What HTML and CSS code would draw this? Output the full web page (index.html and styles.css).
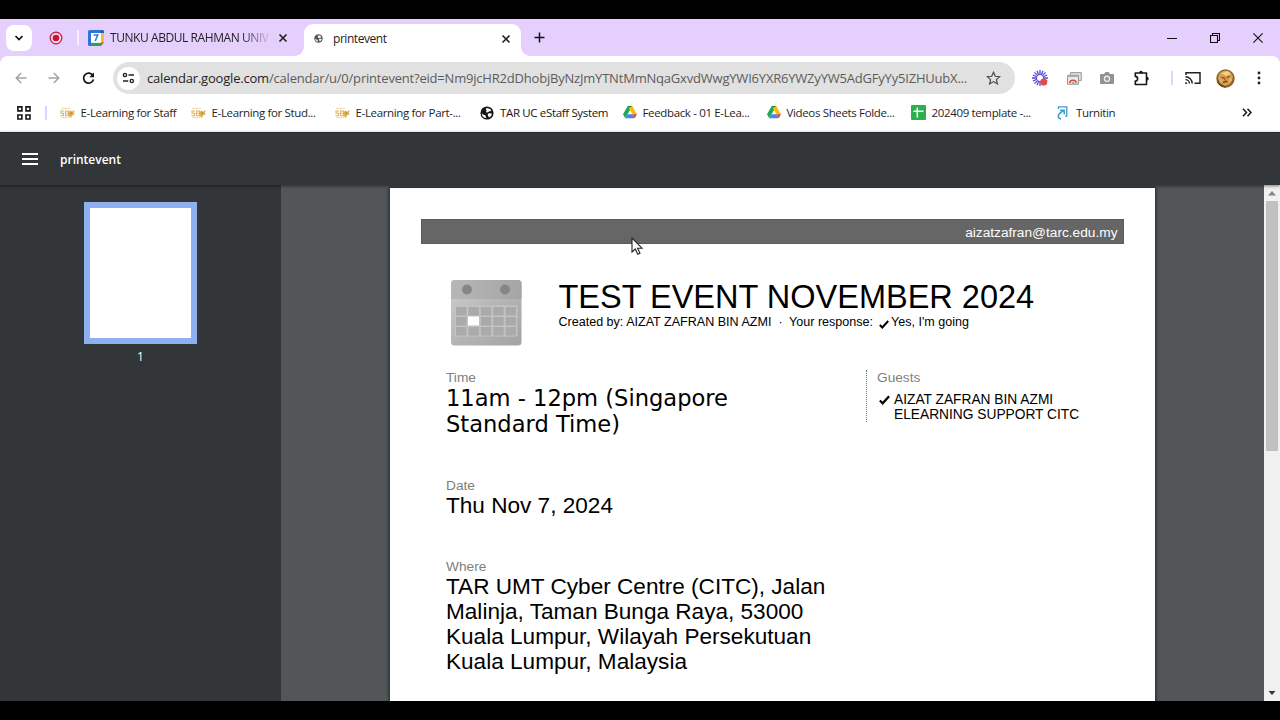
FILE: index.html
```html
<!DOCTYPE html>
<html lang="en">
<head>
<meta charset="utf-8">
<title>printevent</title>
<link rel="stylesheet" href="styles.css">
</head>
<body>
<svg class="defs" width="0" height="0" aria-hidden="true">
  <symbol id="close" viewBox="0 0 10 10"><path d="M1.500 1.500l7 7M8.500 1.500l-7 7" stroke="currentColor" stroke-width="1.600" fill="none"/></symbol>
  <symbol id="globe" viewBox="0 0 16 16"><circle cx="8" cy="8" r="7.500" fill="currentColor"/><path d="M2.200 8.200C3 10.400 5 9.600 6 10.600s.2 2.600 1.400 3.200C4.200 13.800 1.800 11 2.200 8.200zM6.500 3c2-.9 5-.4 6.500 2.200-.8 1.400-2 .4-2.800 1.200-.8.9-1.900 1.200-2.900.6C6.200 6.200 8 5.500 7.500 4.500 7.200 3.900 6.300 3.700 6.500 3zM9 9c1.500-.9 3.600-.7 4.600 0-.5 1.900-1.800 3.500-3.400 4.200C10 11.500 8.300 10.800 9 9z" fill="#fff"/></symbol>
  <symbol id="drive" viewBox="0 0 14 13"><path d="M4.700 0h4.600L7 4z" fill="#188038"/><path d="M4.700 0L0 8.300l2.300 4L7 4z" fill="#21a65a"/><path d="M9.300 0L14 8.300H9.400L5.800 2z" fill="#fbbc04"/><path d="M2.300 12.300L4.600 8.300H9.400l2.300 4z" fill="#4285f4"/><path d="M9.400 8.300H14l-2.300 4z" fill="#ea4335"/></symbol>
  <symbol id="learn" viewBox="0 0 15 12"><path d="M1 1.300h9" stroke="#ecd9a8" stroke-width="1"/><path d="M4 4H1v2.200h2.500v2.500H.5M5.500 4h3v4.700h-3zM5.500 6.200h3" stroke="#dcb469" stroke-width="1.100" fill="none"/><path d="M8.500 4.500l2.500-1 1 1.200 2.500-2-.7 3 .7 1.800-2.500 1-1 2.500-2-1.700z" fill="#e2ae52"/><path d="M1 10.700h8" stroke="#eedcb0"/><path d="M10.500 6.500l1.500-.8" stroke="#9b7638"/></symbol>
  <symbol id="check" viewBox="0 0 10 9"><path d="M0.800 5l2.500 2.500L9.200 1" stroke="#000" stroke-width="2" fill="none"/></symbol>
</svg>

<div class="browser">
  <header class="tabstrip">
    <button class="tab-search"><svg width="10" height="6" viewBox="0 0 10 6"><path d="M1.500 1L5 4.500 8.500 1" stroke="#111" stroke-width="1.700" fill="none"/></svg></button>
    <svg class="record" width="14" height="14" viewBox="0 0 14 14"><circle cx="7" cy="7" r="5.800" fill="#f2dcea" stroke="#c4183c" stroke-width="1.200"/><circle cx="7" cy="7" r="3.300" fill="#c9143a"/></svg>
    <span class="tab-divider"></span>
    <div class="tab tab-idle">
      <svg width="16" height="16" viewBox="0 0 16 16"><path d="M0 1.500Q0 0 1.500 0H13v4H4v12H1.500Q0 16 0 14.500z" fill="#2f73d9"/><path d="M13 0h1.500Q16 0 16 1.500V4h-3z" fill="#1d5bbb"/><path d="M13 3h3v10h-3z" fill="#f6bf26"/><path d="M3 12.500h10V16H3z" fill="#27a557"/><path d="M13 12.500h3L13 16z" fill="#ea4335"/><path d="M3 3h10v9.800H3z" fill="#fff"/><path d="M5.500 5h4.300L7.200 11" stroke="#3277d6" stroke-width="1.500" fill="none"/></svg>
      <span class="tab-title faded">TUNKU ABDUL RAHMAN UNIV</span>
      <svg class="x" width="10" height="10"><use href="#close"/></svg>
    </div>
    <div class="tab tab-active">
      <svg class="favicon" width="9" height="9"><use href="#globe"/></svg>
      <span class="tab-title">printevent</span>
      <svg class="x" width="10" height="10"><use href="#close"/></svg>
    </div>
    <svg class="new-tab" width="11" height="11" viewBox="0 0 11 11"><path d="M5.500 0.500v10M.5 5.500h10" stroke="#111" stroke-width="1.500"/></svg>
    <div class="window-controls">
      <svg width="10" height="10" viewBox="0 0 10 10"><path d="M0 5.500h10" stroke="#111"/></svg>
      <svg width="10" height="10" viewBox="0 0 10 10"><path d="M.5 2.500h7v7h-7zM2.500 2.500V.5h7v7h-2" stroke="#111" stroke-width="1.100" fill="none"/></svg>
      <svg width="10" height="10" viewBox="0 0 10 10"><path d="M.4.4l9.200 9.200M9.600.4L.4 9.600" stroke="#111" stroke-width="1.100"/></svg>
    </div>
  </header>

  <div class="toolbar">
    <svg class="back" width="12" height="12" viewBox="0 0 12 12"><path d="M11.500 6H1.200M6.200 1L1.200 6l5 5" stroke="#a2a2a2" stroke-width="1.400" fill="none"/></svg>
    <svg class="forward" width="12" height="12" viewBox="0 0 12 12"><path d="M.5 6h10.300M5.800 1l5 5-5 5" stroke="#a2a2a2" stroke-width="1.400" fill="none"/></svg>
    <svg class="reload" width="13" height="13" viewBox="0 0 13 13"><path d="M11 3.600A5 5 0 1 0 11.500 7.500" stroke="#161616" stroke-width="1.700" fill="none"/><path d="M12 .5v4.700H7.300z" fill="#161616"/></svg>
    <div class="address">
      <span class="site-info"><svg width="13" height="12" viewBox="0 0 13 12"><g stroke="#222" stroke-width="1.400" fill="none"><circle cx="3" cy="3" r="1.600"/><path d="M6.500 3H12M1 9h5.200"/><circle cx="9.800" cy="9" r="1.600"/></g></svg></span>
      <span class="url"><b>calendar.google.com</b>/calendar/u/0/printevent?eid=Nm9jcHR2dDhobjByNzJmYTNtMmNqaGxvdWwgYWI6YXR6YWZyYW5AdGFyYy5IZHUubX...</span>
      <svg class="star" width="15" height="14" viewBox="0 0 15 14"><path d="M7.500 1.300l1.800 4 4.400.4-3.300 2.900 1 4.300-3.900-2.300-3.900 2.300 1-4.300L1.300 5.700l4.400-.4z" stroke="#4a4a4a" stroke-width="1.200" fill="none"/></svg>
    </div>
    <svg class="ext-loom" width="17" height="17" viewBox="0 0 17 17"><g stroke="#5548d8" stroke-width="1.300"><path d="M8 0v16M0 8h16M2.400 2.400l11.200 11.200M13.600 2.400L2.400 13.600M5 .8l6 14.400M11 .8L5 15.200M.8 5l14.400 6M15.200 5L.8 11"/></g><circle cx="8" cy="8" r="3" fill="#fff"/><circle cx="11.800" cy="12" r="3.500" fill="#e9484f"/></svg>
    <svg class="ext-cards" width="15" height="13" viewBox="0 0 15 13"><path d="M3.500 3V.6h10.800v8H11.500" fill="#ddd" stroke="#9a9a9a"/><path d="M.5 3.300h11v9H.5z" fill="#e9e9e9" stroke="#999"/><path d="M.5 3.500h11v1.500H.5z" fill="#aaa"/><path d="M2.500 11a3.600 3.600 0 0 1 7 0" stroke="#dc4b40" stroke-width="1.700" fill="none"/><path d="M4.500 11.500a1.700 1.700 0 0 1 3.200 0z" fill="#4c86de"/><path d="M8 11.500l1.700-1.700.8 1.700z" fill="#e9b83a"/></svg>
    <svg class="ext-camera" width="14" height="12" viewBox="0 0 14 12"><path d="M1 2h3l1.500-2h3L10 2h3q1 0 1 1v8q0 1-1 1H1q-1 0-1-1V3q0-1 1-1z" fill="#929292"/><circle cx="7" cy="6.800" r="3.200" fill="#eee"/><circle cx="7" cy="6.800" r="1.900" fill="#929292"/></svg>
    <svg class="ext-puzzle" width="16" height="16" viewBox="0 0 16 16"><path d="M1.300 3h11.200v11.500H1.300V11a2.300 2.300 0 0 0 0-4.600z" fill="none" stroke="#161616" stroke-width="1.600" stroke-linejoin="round"/><path d="M5.600 2.700a1.400 1.400 0 0 1 2.800 0zM12.800 7.200a1.500 1.500 0 0 1 0 3z" fill="#161616" stroke="#161616"/></svg>
    <span class="tool-divider"></span>
    <svg class="cast" width="16" height="12" viewBox="0 0 16 12"><path d="M1 3V.8h14v10.400H9.500" stroke="#222" stroke-width="1.500" fill="none"/><path d="M.5 4.800a6.700 6.700 0 0 1 6.700 6.700M.5 7.600a3.900 3.900 0 0 1 3.900 3.900" stroke="#222" stroke-width="1.400" fill="none"/><path d="M.3 10a2 2 0 0 1 2 2h-2z" fill="#222"/></svg>
    <svg class="avatar" width="19" height="19" viewBox="0 0 19 19"><circle cx="9.500" cy="9.500" r="9.200" fill="#8f5f28"/><path d="M3 5Q8-1 14 3l3 4q0 4-3 8l-5 2-5-3-2-5z" fill="#d79f50"/><path d="M5 4l7-2 3 3-5 2z" fill="#f0cf82"/><path d="M3 9l3 3-1 2M14 8l2 3-3 3" fill="#edbd69"/><path d="M5.500 8.500l2.500.5M11 8.500l2.500-1M7 13.500q3-1.500 4.500-.5" stroke="#603a18" stroke-width="1.200" fill="none"/><path d="M9 8l-.5 3 2 .3" stroke="#a85520" fill="none"/><path d="M1.500 13q3 4.500 8 5" stroke="#5b3b1a" stroke-width="1.300" fill="none"/></svg>
    <svg class="kebab" width="4" height="14" viewBox="0 0 4 14"><g fill="#222"><circle cx="2" cy="2" r="1.400"/><circle cx="2" cy="7" r="1.400"/><circle cx="2" cy="12" r="1.400"/></g></svg>
  </div>

  <nav class="bookmarks">
    <svg class="apps" width="14" height="14" viewBox="0 0 14 14"><path d="M.9.9h4v4h-4zM9 .9h4v4H9zM.9 9h4v4h-4zM9 9h4v4H9z" stroke="#161616" stroke-width="1.600" fill="none"/></svg>
    <span class="tool-divider"></span>
    <div class="bookmark-list">
      <a class="bm"><svg width="15" height="12"><use href="#learn"/></svg><span>E-Learning for Staff</span></a>
      <a class="bm"><svg width="15" height="12"><use href="#learn"/></svg><span>E-Learning for Stud...</span></a>
      <a class="bm"><svg width="15" height="12"><use href="#learn"/></svg><span>E-Learning for Part-...</span></a>
      <a class="bm dark"><svg width="14" height="14"><use href="#globe"/></svg><span>TAR UC eStaff System</span></a>
      <a class="bm"><svg width="14" height="13"><use href="#drive"/></svg><span>Feedback - 01 E-Lea...</span></a>
      <a class="bm"><svg width="14" height="13"><use href="#drive"/></svg><span>Videos Sheets Folde...</span></a>
      <a class="bm"><svg width="15" height="15" viewBox="0 0 15 15"><rect width="15" height="15" rx="1" fill="#2bb14c"/><path d="M2.500 6.200h10M6.300 2.500v10" stroke="#fff" stroke-width="1.500"/></svg><span>202409 template -...</span></a>
      <a class="bm turnitin"><svg width="11" height="14" viewBox="0 0 11 14"><path d="M1.500 3V.8H9.800v9.400H8" stroke="#3c9fcc" stroke-width="1.300" fill="none"/><path d="M7.200 8.500V4.300H3M7 4.500Q1.500 7.500 1.300 10q0 2.500 2.700 3" stroke="#3c9fcc" stroke-width="1.500" fill="none"/></svg><span>Turnitin</span></a>
    </div>
    <svg class="more" width="10" height="9" viewBox="0 0 10 9"><path d="M1 .8l3.500 3.700L1 8.200M5.500.8L9 4.500 5.500 8.200" stroke="#161616" stroke-width="1.500" fill="none"/></svg>
  </nav>

  <div class="viewer-bar">
    <svg width="16" height="12" viewBox="0 0 16 12"><path d="M0 1h16M0 6h16M0 11h16" stroke="#fff" stroke-width="1.800"/></svg>
    <span class="doc-name">printevent</span>
  </div>

  <main class="viewer">
    <aside class="thumbs">
      <div class="thumb"></div>
      <span class="thumb-no">1</span>
    </aside>
    <section class="stage">
      <article class="page">
        <div class="owner">aizatzafran@tarc.edu.my</div>
        <div class="event-head">
          <svg width="71" height="66" viewBox="0 0 71 66">
            <defs>
              <linearGradient id="cal" x1="0" y1="0" x2="1" y2="1"><stop offset="0" stop-color="#d0d0d0"/><stop offset=".5" stop-color="#b5b5b5"/><stop offset="1" stop-color="#a3a3a3"/></linearGradient>
              <linearGradient id="calTop" x1="0" x2="1" y1="0" y2="0"><stop offset="0" stop-color="#b7b7b7"/><stop offset="1" stop-color="#a5a5a5"/></linearGradient>
              <pattern id="cells" x="4" y="26" width="12.400" height="10" patternUnits="userSpaceOnUse"><rect x="1" y="1" width="10.600" height="8.600" fill="#aaa"/></pattern>
            </defs>
            <rect width="70.500" height="65.500" rx="3.500" fill="url(#cal)"/>
            <path d="M0 19V3.500Q0 0 3.500 0H67Q70.500 0 70.500 3.500V19z" fill="url(#calTop)"/>
            <circle cx="16" cy="9.500" r="5" fill="#868686"/><circle cx="54" cy="9.500" r="5" fill="#868686"/>
            <rect x="4" y="25.500" width="62.500" height="31" fill="#c4c4c4"/>
            <rect x="4" y="26" width="62" height="30" fill="url(#cells)"/>
            <rect x="17" y="36.500" width="11" height="9" fill="#fff"/>
          </svg>
          <div>
            <h1>TEST EVENT NOVEMBER 2024</h1>
            <p class="byline"><span>Created by: AIZAT ZAFRAN BIN AZMI</span><span class="dot">·</span><span class="resp">Your response:</span><svg width="10" height="9"><use href="#check"/></svg><span>Yes, I'm going</span></p>
          </div>
        </div>
        <div class="details">
          <div class="facts">
            <div class="fact time"><h2>Time</h2><p>11am - 12pm (Singapore<br>Standard Time)</p></div>
            <div class="fact date"><h2>Date</h2><p>Thu Nov 7, 2024</p></div>
            <div class="fact where"><h2>Where</h2><p>TAR UMT Cyber Centre (CITC), Jalan<br>Malinja, Taman Bunga Raya, 53000<br>Kuala Lumpur, Wilayah Persekutuan<br>Kuala Lumpur, Malaysia</p></div>
          </div>
          <div class="guests">
            <h2>Guests</h2>
            <div class="guest"><svg width="11" height="10"><use href="#check"/></svg><span>AIZAT ZAFRAN BIN AZMI</span></div>
            <div class="guest"><i></i><span>ELEARNING SUPPORT CITC</span></div>
          </div>
        </div>
      </article>
    </section>
    <div class="scrollbar">
      <svg width="8" height="5" viewBox="0 0 8 5"><path d="M0 4.500L4 0l4 4.500z" fill="#858585"/></svg>
      <div class="grip"></div>
      <svg class="down" width="8" height="5" viewBox="0 0 8 5"><path d="M.5 0h7L4 4z" fill="#333"/></svg>
    </div>
  </main>
</div>
<svg class="cursor" width="13" height="19" viewBox="0 0 13 19"><path d="M1 1v14l3.300-3 2.400 5.200 2.300-1-2.400-5H11z" fill="#fff" stroke="#222" stroke-width="1.100"/></svg>
</body>
</html>
```
FILE: styles.css
```css
* { box-sizing: border-box; }
body {
  margin: 0;
  width: 1280px;
  height: 720px;
  overflow: hidden;
  background: #000;
  font-family: "Open Sans", "Noto Sans", sans-serif;
  font-size: 12px;
  color: #1f1f1f;
}
svg { display: block; flex: none; }
.defs { position: absolute; }
h1, h2, p { margin: 0; font-weight: 400; }
.browser { display: flex; flex-direction: column; height: 701px; padding-top: 19px; }

/* tab strip */
.tabstrip { position: relative; z-index: 1; display: flex; align-items: center; height: 37px; background: #e5cffc; padding-left: 6px; }
.tab-search {
  display: flex; align-items: center; justify-content: center;
  width: 26px; height: 26px; padding: 0; border: 0; border-radius: 8px; background: #fff;
}
.record { margin-left: 17px; }
.tab-divider { width: 2px; height: 15px; margin-left: 14px; background: #f7effe; }
.tab { display: flex; align-items: center; white-space: nowrap; }
.tab-idle { margin-left: 9px; width: 216px; }
.tab-title { flex: none; letter-spacing: -0.4px; }
.faded {
  width: 160px; margin-left: 6px; letter-spacing: -0.43px;
  mask-image: linear-gradient(90deg, #000 132px, transparent 162px);
}
.tab-idle .x { margin-left: 8px; }
.tab-active {
  position: relative; align-self: flex-end; width: 217px; height: 32px; padding-left: 10px;
  padding-bottom: 3px; border-radius: 9px 9px 0 0; background: #fff; color: #222;
}
.tab-active::before, .tab-active::after {
  content: ""; position: absolute; bottom: 0; width: 9px; height: 9px;
}
.tab-active::before { left: -9px; background: radial-gradient(circle at 0 0, transparent 8.5px, #fff 9px); }
.tab-active::after { right: -9px; background: radial-gradient(circle at 100% 0, transparent 8.5px, #fff 9px); }
.favicon { color: #555; }
.tab-active .tab-title { width: 168px; margin-left: 10px; letter-spacing: -0.55px; letter-spacing: -0.55px; }
.tab-active .tab-title { letter-spacing: -0.45px; }
.window-controls { display: flex; gap: 33px; margin-left: auto; margin-right: 17px; }
.new-tab { margin-left: 13px; }

/* address row */
.toolbar {
  position: relative; display: flex; align-items: center; height: 44px; padding-left: 15px;
  background: #fff; border-radius: 8px 8px 0 0; box-shadow: 0 -8px 0 #e5cffc;
}
.forward { margin-left: 21px; }
.reload { margin-left: 22px; }
.address {
  display: flex; align-items: center; width: 902px; height: 32px; margin-left: 18px;
  padding-left: 4px; border-radius: 16px; background: #e1e1e1;
}
.site-info { display: flex; align-items: center; justify-content: center; width: 23px; height: 23px; border-radius: 50%; background: #fff; }
.url { width: 831px; margin-left: 7px; font-size: 13px; white-space: nowrap; color: #5c5c5c; letter-spacing: -0.2px; }
.url b { font-weight: 400; color: #1f1f1f; }
.star { margin-left: 8px; }
.ext-loom { margin-left: 17px; }
.ext-cards { margin-left: 18px; }
.ext-camera { margin-left: 18px; }
.ext-puzzle { margin-left: 20px; }
.tool-divider { width: 2px; height: 14px; background: #e5cffc; }
.toolbar .tool-divider { margin-left: 21px; }
.cast { margin-left: 12px; }
.avatar { margin-left: 15px; }
.kebab { margin-left: 22px; }

/* bookmarks */
.bookmarks { display: flex; align-items: center; height: 32px; padding: 0 0 7px 17px; background: #fff; }
.bookmarks .tool-divider { margin-left: 14px; }
.bookmark-list { display: grid; grid-template-columns: 131px 144px 145px 143px 144px 144px 146px 80px; margin-left: 13px; }
.bm { display: flex; align-items: center; white-space: nowrap; font-size: 11.5px; }
.bm span { margin-left: 5.500px; letter-spacing: -0.35px; }
.dark span { margin-left: 6px; }
.turnitin span { margin-left: 8px; }
.dark { color: #161616; }
.more { margin-left: 105px; }

/* PDF viewer */
.viewer-bar {
  display: flex; align-items: center; gap: 22px; height: 53px; padding-left: 22px; position: relative; z-index: 1;
  background: #323639; border-top: 1px solid #27292b; box-shadow: 0 1px 3px rgba(0,0,0,.5); color: #fff;
}
.doc-name { font-weight: 600; letter-spacing: 0; }
.viewer { display: flex; height: 516px; }
.thumbs { display: flex; flex-direction: column; align-items: center; width: 281px; padding-top: 17px; background: #323639; color: #fff; }
.thumb { width: 113px; height: 142px; border: 6px solid #8fb0ee; background: #fff; }
.thumb-no { margin-top: 5px; line-height: 16px; font-size: 12px; }
.stage { width: 983px; padding: 3px 0 0 109px; background: #525659; overflow: hidden; }
.page {
  width: 764.5px; height: 520px; padding: 31px 0 0 31px; background: #fff; box-shadow: 0 0 3px 1px rgba(20,28,28,.8);
  font-family: "Liberation Sans", Arial, sans-serif; color: #000;
}
.owner { width: 702.5px; height: 25px; padding-right: 5px; border: 1px solid #5c5c5c; background: #666; color: #fff; text-align: right; font-size: 13.700px; line-height: 26px; }
.event-head { display: flex; gap: 37px; padding: 36px 0 0 29.500px; height: 126px; }
h1 { margin-top: -1px; font-size: 32.500px; line-height: 36px; white-space: nowrap; }
.byline { display: flex; align-items: center; font-size: 12.550px; line-height: 15px; white-space: nowrap; }
.dot { margin: 0 6.500px 0 7px; }
.resp { margin-right: 6px; }
.byline svg { margin: 3px 2px 0 0; }
.details { display: flex; padding-left: 25px; white-space: nowrap; }
.facts { width: 420px; }
h2 { font-size: 13.700px; line-height: 16px; color: #808080; }
.fact p { margin-top: -1px; font-size: 22.580px; line-height: 25px; }
.time { height: 108px; }
.time p { font-family: "DejaVu Sans", sans-serif; line-height: 26px; }
.date { height: 81px; }
.guests { height: 52px; padding-left: 10px; border-left: 1px dotted #777; }
.guests h2 { margin-bottom: 6px; }
.guest { display: grid; grid-template-columns: 17px auto; align-items: center; font-size: 13.750px; line-height: 15px; }
.guest svg { margin-left: 2px; }
.scrollbar { display: flex; flex-direction: column; align-items: center; width: 16px; padding: 6px 0 5px; background: #f1f1f1; }
.grip { width: 12px; height: 250px; margin-top: 5px; background: #c1c1c1; }
.down { margin-top: auto; }
.cursor { position: absolute; left: 631px; top: 237px; z-index: 2; }
```
